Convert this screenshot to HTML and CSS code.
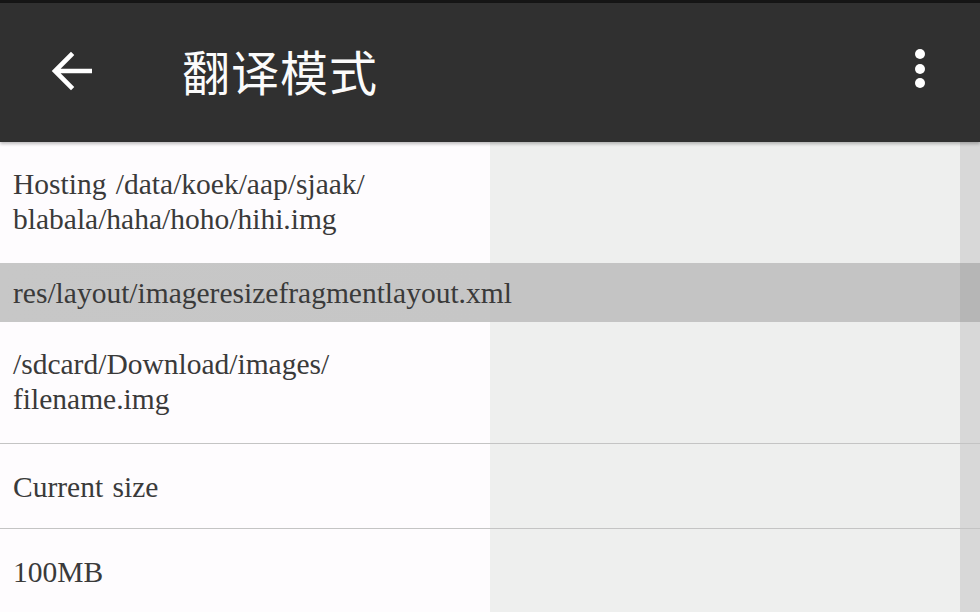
FILE: index.html
```html
<!DOCTYPE html>
<html>
<head>
<meta charset="utf-8">
<link rel="stylesheet" href="styles.css">
</head>
<body>
<div class="status"></div>
<header class="toolbar">
  <div class="back">
    <svg width="44" height="44" viewBox="0 0 44 44"><path d="M42 21H10M23 5L7 21L23 37" fill="none" stroke="#fff" stroke-width="4.6" stroke-linecap="square"/></svg>
  </div>
  <h1 class="title">翻译模式</h1>
  <div class="menu">
    <svg width="12" height="42" viewBox="0 0 12 42"><circle cx="6" cy="6" r="5" fill="#fff"/><circle cx="6" cy="21" r="5" fill="#fff"/><circle cx="6" cy="35" r="5" fill="#fff"/></svg>
  </div>
</header>
<main class="list">
  <div class="row two">Hosting /data/koek/aap/sjaak/<br>blabala/haha/hoho/hihi.img</div>
  <div class="row one selected">res/layout/imageresizefragmentlayout.xml</div>
  <div class="row two">/sdcard/Download/images/<br>filename.img</div>
  <div class="row mid divided">Current size</div>
  <div class="row mid divided">100MB</div>
</main>
</body>
</html>
```
FILE: styles.css
```css
html, body {
  margin: 0;
  padding: 0;
  width: 980px;
  height: 612px;
  overflow: hidden;
  background: #fefcfe;
}
.status {
  height: 3px;
  background: #151515;
}
.toolbar {
  height: 139px;
  background: #303030;
  display: flex;
  align-items: center;
  position: relative;
  z-index: 1;
  box-shadow: 0 2px 3px rgba(0,0,0,0.25);
}
.back {
  width: 44px;
  height: 44px;
  margin-left: 48px;
  margin-top: -2px;
}
.title {
  margin: 0 0 0 90px;
  font-family: "Noto Sans CJK SC", sans-serif;
  font-weight: 400;
  font-size: 48px;
  color: #fbfbfb;
  letter-spacing: 1px;
  flex: 1;
  margin-top: -6px;
}
.menu {
  width: 12px;
  height: 42px;
  margin-right: 54px;
  margin-top: -8px;
}
.list {
  background: linear-gradient(to right, #fefcfe 0, #fefcfe 490px, #eeefee 490px, #eeefee 960px, #d8d8d8 960px);
  height: 470px;
}
.row {
  font-family: "Liberation Serif", "DejaVu Serif", serif;
  font-size: 29.5px;
  color: #3a3a3a;
  padding-left: 13px;
  box-sizing: border-box;
  word-spacing: 2px;
}
.row.two {
  height: 121px;
  line-height: 35px;
  padding-top: 25px;
}
.row.one {
  height: 59px;
  line-height: 60px;
}
.row.selected {
  background: linear-gradient(to right, #c7c7c7 0, #c6c6c6 490px, #c4c4c4 490px, #c4c4c4 960px, #b6b6b6 960px);
}
.row.mid {
  height: 85px;
  line-height: 87px;
}
.row.divided {
  border-top: 1px solid #c4c4c4;
}
```
